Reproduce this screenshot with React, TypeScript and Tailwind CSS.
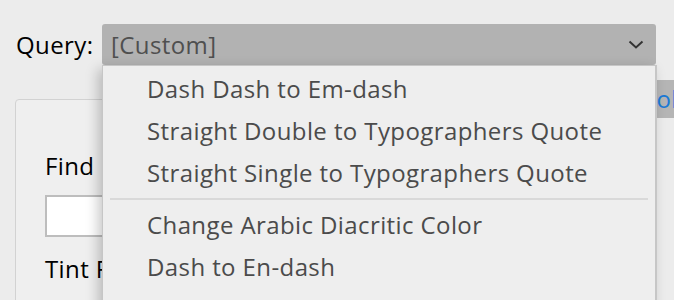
import React from 'react';

const items = [
  'Dash Dash to Em-dash',
  'Straight Double to Typographers Quote',
  'Straight Single to Typographers Quote',
];

const items2 = [
  'Change Arabic Diacritic Color',
  'Dash to En-dash',
  'Multiple Return to Single Return',
];

const App = () => {
  return (
    <div className="relative w-[674px] h-[300px] overflow-hidden bg-[#ececec] font-['Open_Sans',sans-serif] tracking-[0.4px]">
      {/* Query row */}
      <div className="flex items-center pt-[24px] pl-[16px] pr-[18px]">
        <span className="w-[86px] text-[24px] text-black">Query:</span>
        <div className="flex h-[41px] flex-1 items-center justify-between rounded-[3px] bg-[#b2b2b2] pl-[9px] pr-[12px]">
          <span className="text-[24px] text-[#4f4f4f]">[Custom]</span>
          <svg width="16" height="10" viewBox="0 0 16 10" fill="none">
            <path d="M1.5 1.5 L8 7.5 L14.5 1.5" stroke="#333" strokeWidth="2" />
          </svg>
        </div>
      </div>

      {/* panel behind */}
      <div className="flex">
        <div className="mt-[34px] ml-[15px] h-[300px] w-[600px] shrink-0 rounded-tl-[4px] border border-[#d2d2d2] bg-[#efefef] pl-[29px] pt-[50px]">
          <div className="text-[24px] leading-[32px] text-black">Find</div>
          <div className="mt-[13px] h-[42px] w-[200px] border-2 border-[#bdbdbd] bg-white" />
          <div className="mt-[16px] text-[24px] leading-[32px] text-black">Tint Fill</div>
        </div>
        <div className="mt-[15px] ml-[26px] flex h-[38px] w-[80px] shrink-0 items-center bg-[#b5b5b5] text-[24px] text-[#1b7ad6]">
          Color
        </div>
      </div>

      {/* dropdown menu */}
      <div className="absolute left-[102px] top-[65px] w-[555px] h-[260px] border-l border-t border-r-2 border-[#c6c6c6] bg-[#eeeeee] pt-[2px] shadow-[-4px_4px_12px_rgba(0,0,0,0.22)]">
        {items.map((t) => (
          <div key={t} className="flex h-[42px] items-center pl-[44px] text-[24px] text-[#4b4b4b]">
            {t}
          </div>
        ))}
        <div className="py-[4px] px-[7px]">
          <div className="h-[2px] bg-[#d9d9d9]" />
        </div>
        {items2.map((t) => (
          <div key={t} className="flex h-[42px] items-center pl-[44px] text-[24px] text-[#4b4b4b]">
            {t}
          </div>
        ))}
      </div>
    </div>
  );
};

export default App;
